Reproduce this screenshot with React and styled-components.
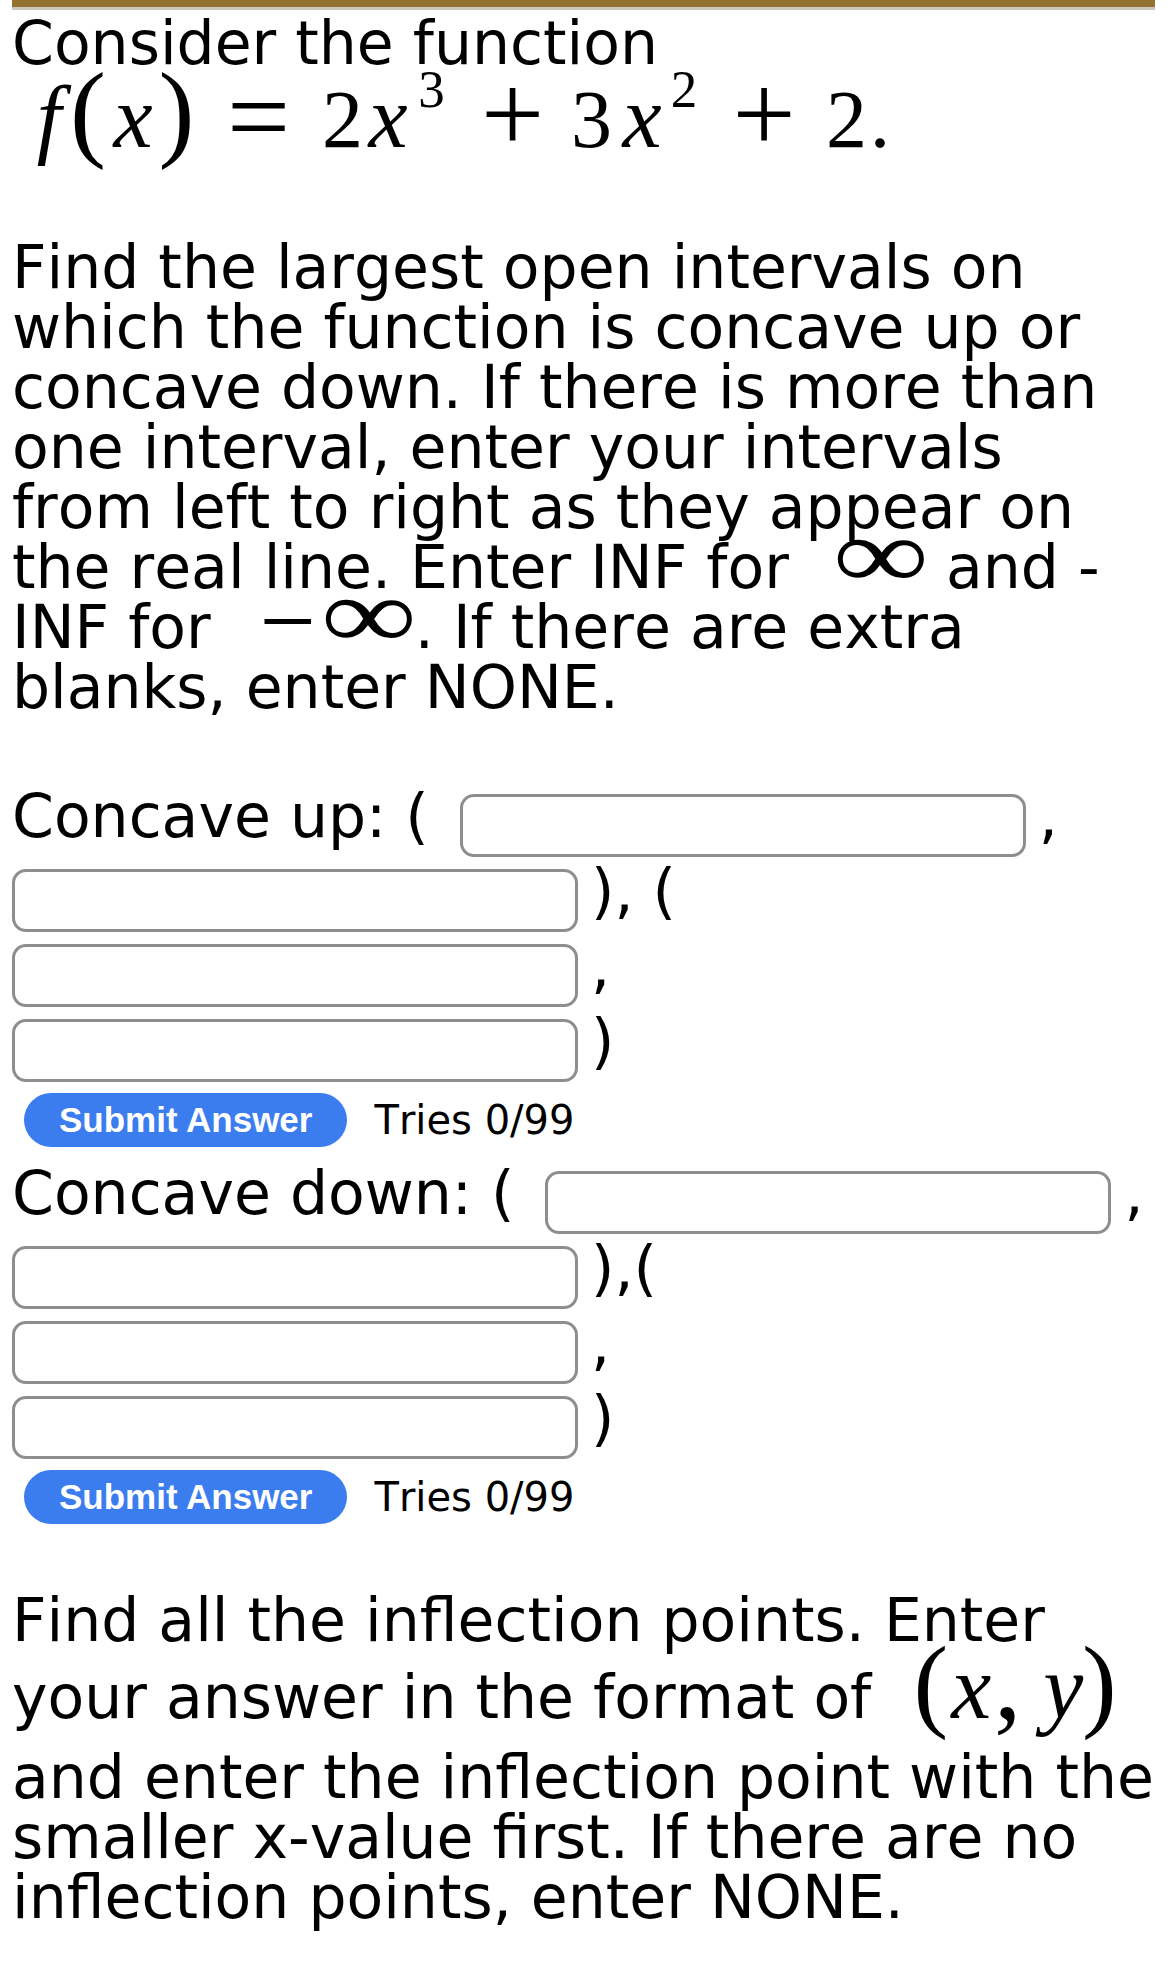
import React from "react";
import styled, { createGlobalStyle } from "styled-components";

const GlobalStyle = createGlobalStyle`
  html, body {
    margin: 0;
    padding: 0;
    background: #fff;
  }
  body {
    font-family: "DejaVu Sans", Verdana, sans-serif;
    color: #000;
    font-kerning: none;
  }
`;

// glyph cells of the typeset formulas: centre, width and gap in px
const FX = [
  { c: "f", it: true, ml: 15, w: 44, size: 88 },
  { c: "(", ml: 2, w: 30, size: 108 },
  { c: "x", it: true, ml: 5, w: 50, size: 88 },
  { c: ")", ml: 7, w: 23, size: 108 },
  { c: "=", ml: 41, w: 59, size: 112, raise: -7 },
  { c: "2", ml: 37, w: 35 },
  { c: "x", it: true, ml: 3, w: 50, size: 88 },
  { c: "3", ml: 4, w: 29, size: 53, raise: 40 },
  { c: "+", ml: 37, w: 59, size: 112, raise: -5 },
  { c: "3", ml: 30, w: 39 },
  { c: "x", it: true, ml: 8, w: 46, size: 88 },
  { c: "2", ml: 5, w: 28, size: 53, raise: 40 },
  { c: "+", ml: 37, w: 58, size: 112, raise: -5 },
  { c: "2", ml: 34, w: 39 },
  { c: ".", ml: 7, w: 14 },
];

const XY = [
  { c: "(", ml: 29, w: 23, size: 104, lh: 66 },
  { c: "x", it: true, ml: 7, w: 44 },
  { c: ",", ml: 9, w: 11, size: 110 },
  { c: "y", it: true, ml: 28, w: 44 },
  { c: ")", ml: 2, w: 24, size: 104, lh: 66 },
];

const renderGlyphs = (list) =>
  list.map((g, i) => (
    <Glyph
      key={i}
      $w={g.w}
      $ml={g.ml}
      $size={g.size}
      $it={g.it}
      $lh={g.lh}
      $raise={g.raise}
      $sx={g.sx}
    >
      {g.c}
    </Glyph>
  ));

const AnswerBlock = ({ label, between, mt }) => (
  <AnswerRow $mt={mt}>
    <Label>{label}</Label>
    <Blank type="text" />
    <Punct>,</Punct>
    <Blank type="text" />
    <Punct>{between}</Punct>
    <Blank type="text" />
    <Punct>,</Punct>
    <Blank type="text" />
    <Punct>)</Punct>
  </AnswerRow>
);

const SubmitRow = () => (
  <ButtonRow>
    <SubmitButton type="button">Submit Answer</SubmitButton>
    <Tries>Tries 0/99</Tries>
  </ButtonRow>
);

const App = () => (
  <>
    <GlobalStyle />
    <Page>
      <Bar />
      <Para $mt={3}>Consider the function</Para>
      <FormulaLine>{renderGlyphs(FX)}</FormulaLine>

      <Para>
        Find the largest open intervals on which the function is concave up
        or concave down. If there is more than one interval, enter your
        intervals from left to right as they appear on the real line. Enter
        INF for{" "}
        <MathRun>
          <Glyph $ml={27} $w={92} $size={100} $sx={1.35}>
            ∞
          </Glyph>
        </MathRun>{" "}
        and -<wbr />
        INF for{" "}
        <MathRun>
          <Glyph $ml={27} $w={62} $size={100} $raise={-7}>
            −
          </Glyph>
          <Glyph $ml={4} $w={92} $size={100} $sx={1.35}>
            ∞
          </Glyph>
        </MathRun>
        . If there are extra blanks, enter NONE.
      </Para>

      <AnswerBlock label="Concave up: (" between="), (" mt={69} />
      <SubmitRow />

      <AnswerBlock label="Concave down: (" between="),(" mt={16} />
      <SubmitRow />

      <Para $mt={66}>
        Find all the inflection points. Enter your answer in the format of{" "}
        <TallMath>{renderGlyphs(XY)}</TallMath> and enter the inflection point
        with the smaller x-value first. If there are no inflection points,
        enter NONE.
      </Para>
    </Page>
  </>
);

export default App;

const Page = styled.main`
  width: 1148px;
  padding: 0 10px 40px 12px;
  font-size: 60px;
  line-height: 60px;
`;

const Bar = styled.div`
  height: 7px;
  margin-right: 5px;
  background: #93722f;
  border-bottom: 3px solid #ccc8c0;
`;

const Para = styled.p`
  margin: ${({ $mt }) => $mt || 0}px 0 0;
`;

const FormulaLine = styled.div`
  height: 88px;
  margin: 16px 0 60px;
  font-family: "Liberation Serif", "Times New Roman", serif;
  font-size: 82px;
  line-height: 0;
  white-space: nowrap;
`;

const MathRun = styled.span`
  font-family: "Liberation Serif", "Times New Roman", serif;
  line-height: 0;
  white-space: nowrap;
`;

const TallMath = styled(MathRun)`
  display: inline-block;
  font-size: 90px;
  padding-bottom: 31px;
`;

const Glyph = styled.span`
  display: inline-flex;
  justify-content: center;
  width: ${({ $w }) => $w}px;
  margin-left: ${({ $ml }) => $ml || 0}px;
  font-size: ${({ $size }) => ($size ? `${$size}px` : "inherit")};
  font-style: ${({ $it }) => ($it ? "italic" : "normal")};
  line-height: ${({ $lh }) => ($lh ? `${$lh}px` : 0)};
  vertical-align: ${({ $raise }) => $raise || 0}px;
  transform: ${({ $sx }) => ($sx ? `scaleX(${$sx})` : "none")};
`;

const AnswerRow = styled.div`
  display: flex;
  flex-wrap: wrap;
  align-items: flex-start;
  row-gap: 4px;
  margin-top: ${({ $mt }) => $mt}px;
`;

const Label = styled.span`
  padding-right: 31px;
  white-space: pre;
`;

const Punct = styled.span`
  white-space: pre;
`;

const Blank = styled.input`
  box-sizing: border-box;
  width: 566px;
  height: 63px;
  margin: 8px 13px 0 0;
  padding: 0 14px;
  border: 3px solid #8e8e8e;
  border-radius: 14px;
  background: #fff;
  font-family: inherit;
  font-size: 40px;
  outline: none;
`;

const ButtonRow = styled.div`
  display: flex;
  align-items: center;
  gap: 27px;
  margin: 11px 0 0 12px;
`;

const SubmitButton = styled.button`
  height: 54px;
  padding: 0 35px;
  border: none;
  border-radius: 27px;
  background: #3b7cef;
  color: #fff;
  font-family: "Liberation Sans", Arial, sans-serif;
  font-weight: bold;
  font-size: 35px;
  cursor: pointer;
`;

const Tries = styled.span`
  font-size: 40px;
  line-height: 40px;
`;
